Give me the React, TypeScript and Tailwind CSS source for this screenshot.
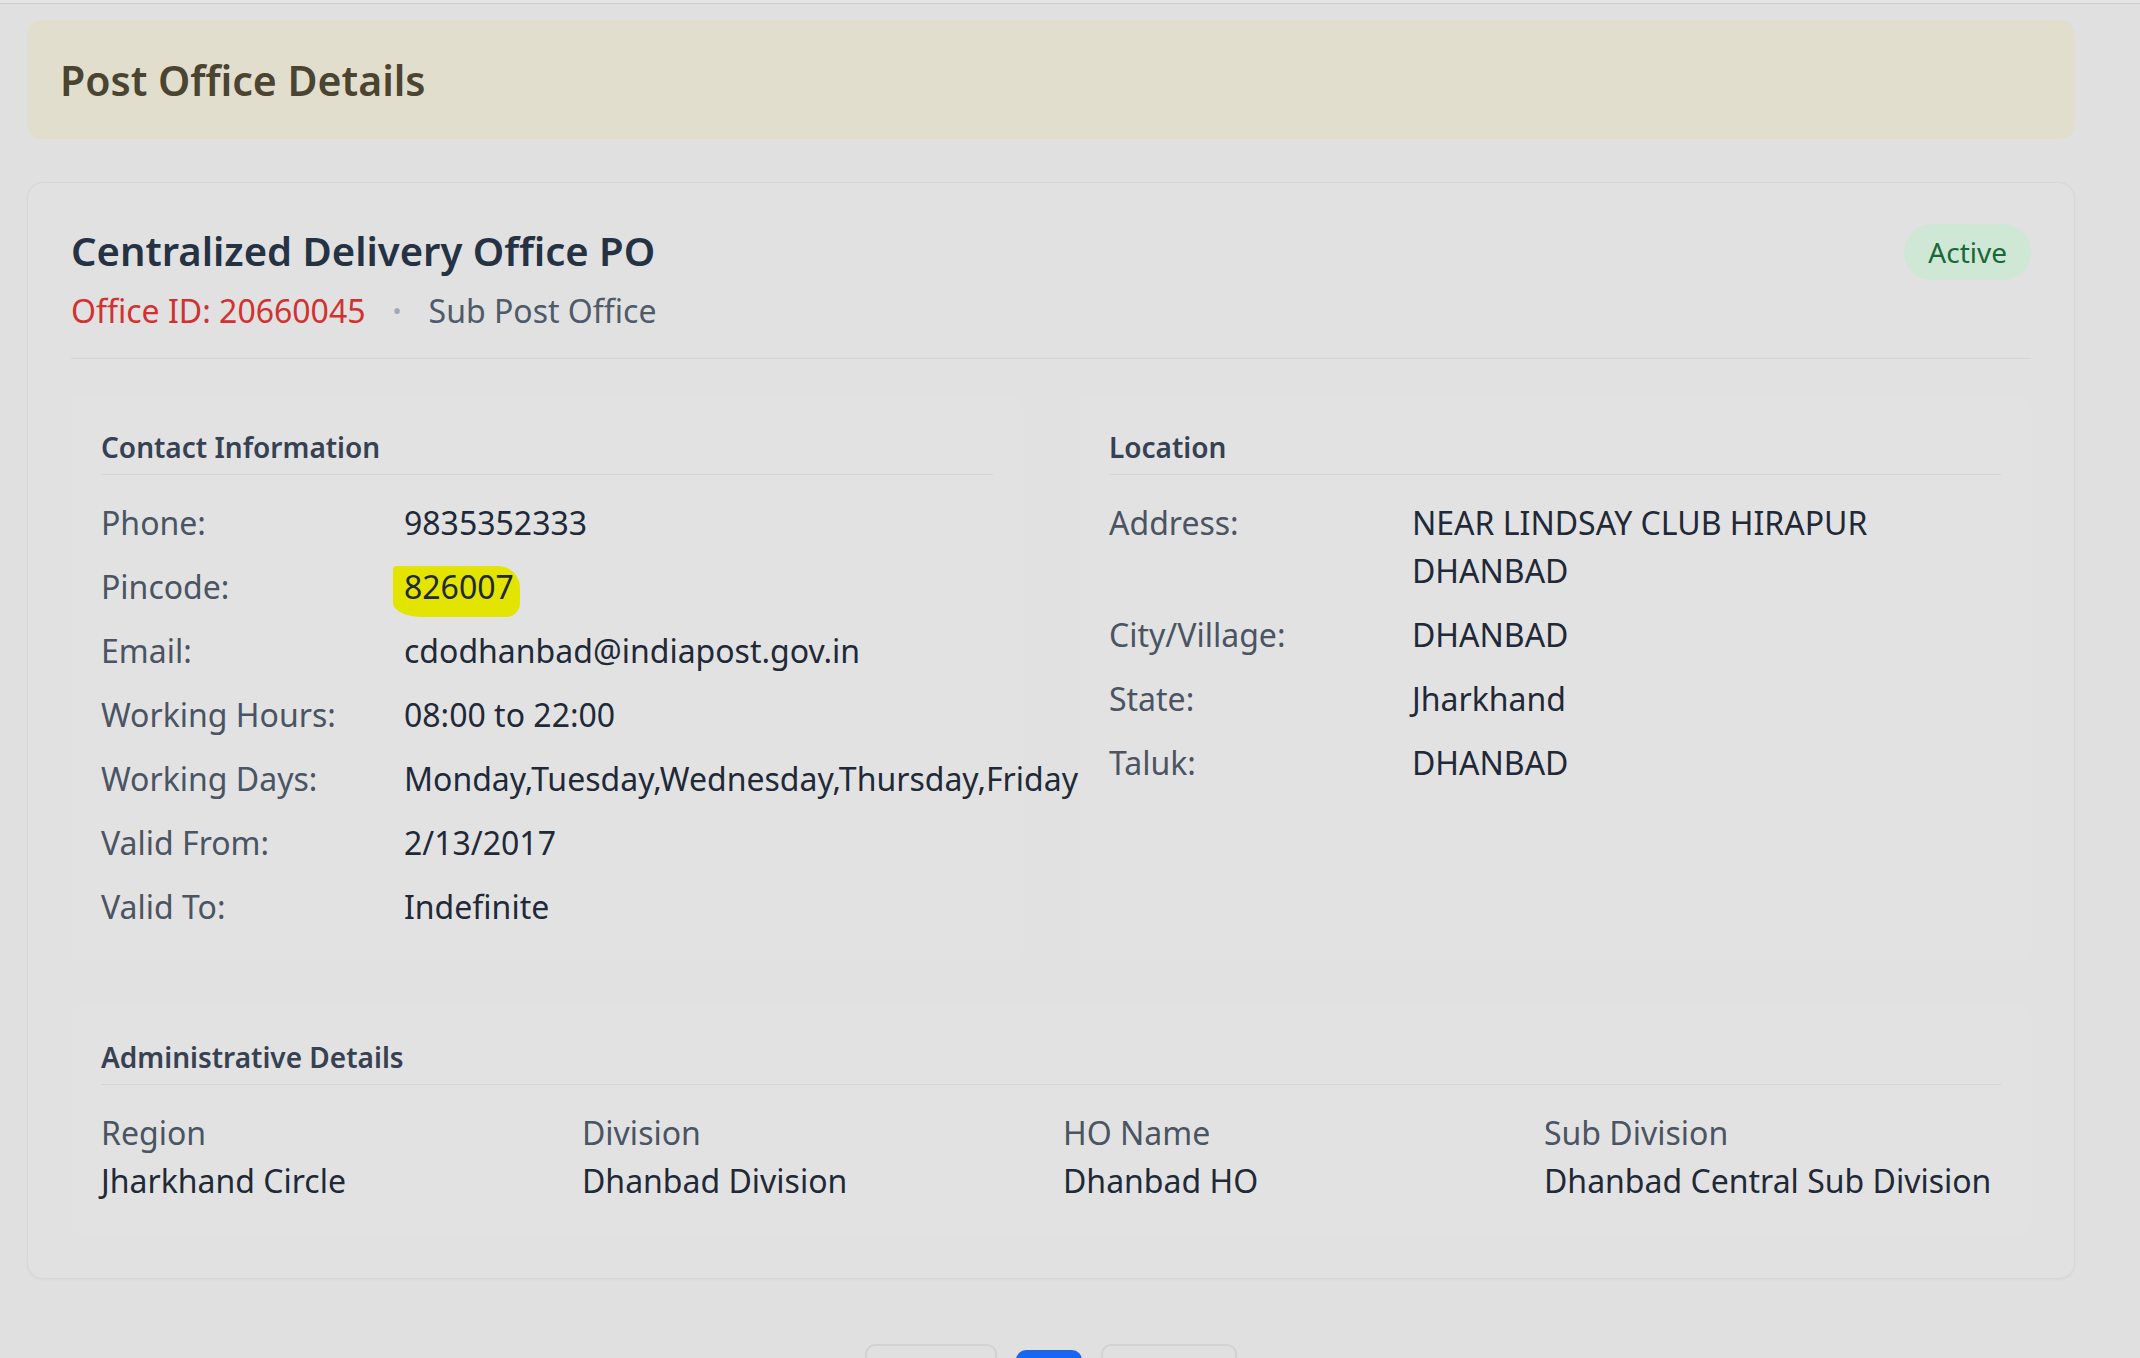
const contact: [string, string][] = [
  ["Phone:", "9835352333"],
  ["Pincode:", "826007"],
  ["Email:", "cdodhanbad@indiapost.gov.in"],
  ["Working Hours:", "08:00 to 22:00"],
  ["Working Days:", "Monday,Tuesday,Wednesday,Thursday,Friday"],
  ["Valid From:", "2/13/2017"],
  ["Valid To:", "Indefinite"],
];

const location: [string, string][] = [
  ["Address:", "NEAR LINDSAY CLUB HIRAPUR DHANBAD"],
  ["City/Village:", "DHANBAD"],
  ["State:", "Jharkhand"],
  ["Taluk:", "DHANBAD"],
];

const admin: [string, string][] = [
  ["Region", "Jharkhand Circle"],
  ["Division", "Dhanbad Division"],
  ["HO Name", "Dhanbad HO"],
  ["Sub Division", "Dhanbad Central Sub Division"],
];

function SectionTitle({ children }: { children: string }) {
  return (
    <h3 className="border-b border-[#d5d5d5] pb-[6px] text-[28px] font-semibold leading-[42px] text-[#364152]">
      {children}
    </h3>
  );
}

function Row({ label, value }: { label: string; value: string }) {
  const marked = label === "Pincode:";
  return (
    <div className="flex text-[32px] leading-[48px]">
      <span className="w-[303px] shrink-0 text-[#4a5463]">{label}</span>
      {marked ? (
        <span className="relative whitespace-nowrap text-[#1f2937]">
          {/* highlighter stroke */}
          <span className="absolute -left-[11px] -right-[6px] top-[3px] -bottom-[6px] rounded-[4px_22px_14px_30px/4px_22px_14px_14px] bg-[#e3e400]" />
          <span className="relative">{value}</span>
        </span>
      ) : (
        <span className="whitespace-nowrap text-[#1f2937]">{value}</span>
      )}
    </div>
  );
}

export default function App() {
  return (
    <div className="min-h-screen bg-[#e0e0e0] font-['Noto_Sans',sans-serif]">
      <div className="h-[4px] border-b border-[#cdcdcd] bg-[#e4e4e4]" />
      <div className="ml-[27px] w-[2048px]">
        <div className="mt-[16px] flex h-[119px] items-center rounded-[14px] bg-[#e2dece] px-[33px] pt-[3px]">
          <h1 className="text-[41px] font-semibold text-[#4a4430]">Post Office Details</h1>
        </div>

        <div className="mt-[43px] rounded-[16px] border border-[#d7d7d7] bg-[#e1e1e1] px-[43px] pt-[40px] pb-[43px] shadow-[0_1px_3px_rgba(0,0,0,0.04)]">
          <div className="flex items-start justify-between border-b border-[#d5d5d5] pb-[23px]">
            <div>
              <h2 className="text-[40px] font-semibold leading-[56px] text-[#253244]">
                Centralized Delivery Office PO
              </h2>
              <p className="mt-[8px] flex items-center text-[32px] leading-[48px]">
                <span className="text-[#d03232]">Office ID: 20660045</span>
                <span className="mx-[27px] text-[24px] text-[#a3a9b3]">•</span>
                <span className="text-[#4f5a6a]">Sub Post Office</span>
              </p>
            </div>
            <span className="mt-[1px] rounded-full bg-[#cfe7d5] px-[24px] py-[7px] text-[28px] leading-[42px] text-[#17693a]">
              Active
            </span>
          </div>

          <div className="mt-[37px] grid grid-cols-2 gap-[56px]">
            <div className="rounded-[10px] bg-[#e2e2e2] p-[30px]">
              <SectionTitle>Contact Information</SectionTitle>
              <div className="mt-[24px] flex flex-col gap-[16px]">
                {contact.map(([l, v]) => (
                  <Row key={l} label={l} value={v} />
                ))}
              </div>
            </div>
            <div className="rounded-[10px] bg-[#e2e2e2] p-[30px]">
              <SectionTitle>Location</SectionTitle>
              <div className="mt-[24px] flex flex-col gap-[16px]">
                {location.map(([l, v]) => (
                  <div key={l} className="flex text-[32px] leading-[48px]">
                    <span className="w-[303px] shrink-0 text-[#4a5463]">{l}</span>
                    <span className="w-[500px] text-[#1f2937]">{v}</span>
                  </div>
                ))}
              </div>
            </div>
          </div>

          <div className="mt-[45px] rounded-[10px] bg-[#e2e2e2] p-[30px]">
            <SectionTitle>Administrative Details</SectionTitle>
            <div className="mt-[24px] grid grid-cols-4 gap-[24px]">
              {admin.map(([l, v]) => (
                <div key={l} className="text-[32px] leading-[48px]">
                  <div className="text-[#4a5463]">{l}</div>
                  <div className="text-[#1f2937]">{v}</div>
                </div>
              ))}
            </div>
          </div>
        </div>

        <div className="mt-[65px] flex items-start justify-center gap-[19px]">
          <div className="h-[60px] w-[132px] rounded-[10px] border-2 border-[#d2d2d2]" />
          <div className="mt-[6px] h-[54px] w-[66px] rounded-[10px] bg-[#1a66f2]" />
          <div className="h-[60px] w-[136px] rounded-[10px] border-2 border-[#d2d2d2]" />
        </div>
      </div>
    </div>
  );
}
